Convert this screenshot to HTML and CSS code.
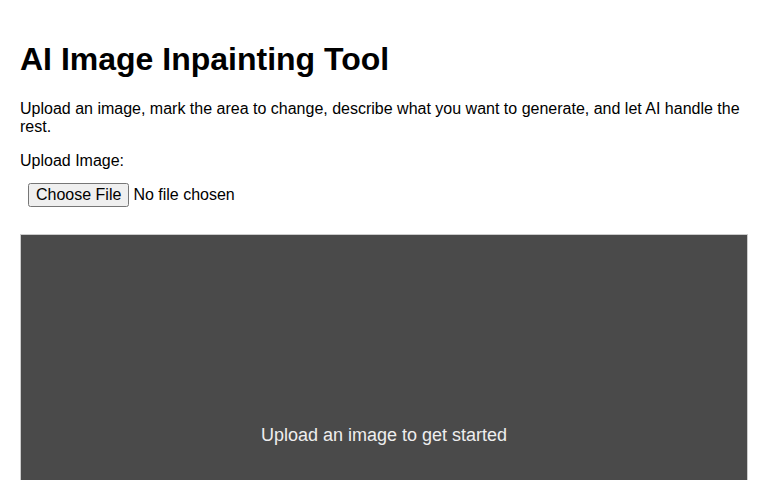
FILE: index.html
```html
<!DOCTYPE html>
<html>
<head>
<meta charset="utf-8">
<link rel="stylesheet" href="styles.css">
</head>
<body>
<h1 class="title">AI Image Inpainting Tool</h1>
<p class="intro">Upload an image, mark the area to change, describe what you want to generate, and let AI handle the rest.</p>
<label class="upload-label" for="file">Upload Image:</label>
<input class="file-input" id="file" type="file">
<div class="canvas">
  <div class="placeholder">Upload an image to get started</div>
</div>
</body>
</html>
```
FILE: styles.css
```css
html, body {
  margin: 0;
  background: #fff;
}
body {
  padding: 20px;
  font-family: "Liberation Sans", Arial, sans-serif;
  color: #000;
}
.title {
  font-size: 32px;
  font-weight: bold;
  margin: 21px 0 22px;
}
.intro {
  font-size: 16px;
  margin: 16px 0;
}
.upload-label {
  display: block;
  font-size: 16px;
  margin-bottom: 5px;
}
.file-input {
  display: block;
  padding: 8px;
  font-family: "Liberation Sans", Arial, sans-serif;
  font-size: 16px;
}
.canvas {
  margin-top: 19px;
  height: 400px;
  border: 1px solid #ccc;
  background: #4a4a4a;
  display: flex;
  align-items: center;
  justify-content: center;
}
.placeholder {
  color: #eee;
  font-size: 18px;
}
```
